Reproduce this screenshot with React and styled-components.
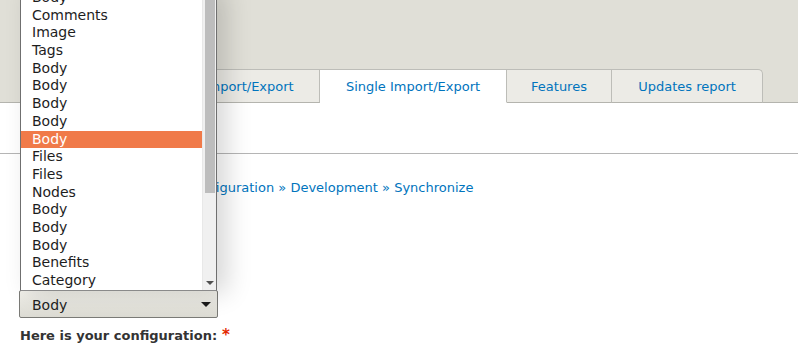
import React from 'react';
import styled, { createGlobalStyle } from 'styled-components';

const GlobalStyle = createGlobalStyle`
    html, body {
        margin: 0;
        padding: 0;
        background: #ffffff;
    }
    body {
        font-family: "DejaVu Sans", Verdana, sans-serif;
        color: #333333;
    }
`;

const Page = styled.div`
    position: relative;
    width: 798px;
    height: 343px;
    overflow: hidden;
    background: #ffffff;
`;

const Header = styled.header`
    height: 103px;
    background: #e0dfd7;
    border-bottom: 1px solid #b4b4ae;
    box-sizing: border-box;
    display: flex;
    align-items: flex-end;
    justify-content: flex-end;
    padding-right: 35px;
`;

const Tabs = styled.ul`
    display: flex;
    margin: 0 0 -1px 0;
    padding: 0;
    list-style: none;
`;

const Tab = styled.li`
    width: ${(p) => p.width}px;
    height: 34px;
    box-sizing: border-box;
    display: flex;
    align-items: center;
    justify-content: center;
    font-size: 13px;
    color: #0074bd;
    background: ${(p) => (p.active ? '#ffffff' : '#ecebe6')};
    border: 1px solid #bdbdb8;
    border-bottom: ${(p) => (p.active ? '1px solid #ffffff' : '1px solid #b4b4ae')};
    border-left-width: ${(p) => (p.first ? '1px' : '0')};
    border-radius: ${(p) => (p.last ? '0 5px 0 0' : p.first ? '5px 0 0 0' : '0')};
    padding-top: 1px;
`;

const SubBar = styled.div`
    height: 50px;
    border-bottom: 1px solid #b5b5b5;
`;

const Content = styled.div`
    padding: 0 20px;
`;

const Breadcrumb = styled.nav`
    margin-top: 26px;
    font-size: 13px;
    color: #0074bd;
    white-space: nowrap;
`;

const Crumb = styled.span`
    color: #0074bd;
`;

const Form = styled.form`
    margin-top: 95px;
`;

const SelectBox = styled.div`
    margin-left: -1px;
    width: 199px;
    height: 28px;
    box-sizing: border-box;
    border: 1px solid #7a7a76;
    border-radius: 2px;
    background: linear-gradient(#f1f0ea, #dcdbd3);
    display: flex;
    align-items: center;
    justify-content: space-between;
    padding: 1px 6px 0 12px;
    font-size: 14px;
    color: #222222;
`;

const Arrow = styled.span`
    width: 0;
    height: 0;
    border-left: ${(p) => p.size}px solid transparent;
    border-right: ${(p) => p.size}px solid transparent;
    border-top: ${(p) => p.size}px solid ${(p) => p.color};
`;

const Label = styled.label`
    display: block;
    margin-top: 10px;
    font-size: 13px;
    line-height: 16px;
    font-weight: bold;
    color: #333333;
`;

const Required = styled.span`
    color: #e32700;
    font-weight: bold;
    font-size: 15px;
    line-height: 0;
    margin-left: 5px;
`;

const Popup = styled.div`
    position: absolute;
    left: 20px;
    top: -12px;
    width: 197px;
    box-sizing: border-box;
    border: 1px solid #6f6f6f;
    border-bottom-color: #8a8a8a;
    background: #ffffff;
    display: flex;
    box-shadow: 10px 2px 24px rgba(0, 0, 0, 0.16);
`;

const Options = styled.ul`
    flex: 1;
    margin: 0;
    padding: 0;
    list-style: none;
`;

const Option = styled.li`
    height: 17.7px;
    line-height: 17.7px;
    padding-left: 11px;
    font-size: 14px;
    color: ${(p) => (p.selected ? '#ffffff' : '#1d1d1d')};
    background: ${(p) => (p.selected ? '#f07a49' : 'transparent')};
`;

const Scrollbar = styled.div`
    width: 14px;
    background: #f0f0f0;
    border-left: 1px solid #e8e8e8;
    display: flex;
    flex-direction: column;
    align-items: center;
    padding-bottom: 5px;
    box-sizing: border-box;
`;

const Thumb = styled.div`
    width: 10px;
    height: 204px;
    background: #bdbdbd;
    margin-bottom: auto;
`;

const options = [
    'Body', 'Comments', 'Image', 'Tags', 'Body', 'Body', 'Body', 'Body',
    'Body', 'Files', 'Files', 'Nodes', 'Body', 'Body', 'Body', 'Benefits',
    'Category',
];

const tabs = [
    { label: 'Full Import/Export', width: 169 },
    { label: 'Single Import/Export', width: 187, active: true },
    { label: 'Features', width: 105 },
    { label: 'Updates report', width: 151 },
];

const App = () => (
    <Page>
        <GlobalStyle />
        <Header>
            <Tabs>
                {tabs.map((t, i) => (
                    <Tab
                        key={t.label}
                        width={t.width}
                        active={t.active}
                        first={i === 0}
                        last={i === tabs.length - 1}
                    >
                        {t.label}
                    </Tab>
                ))}
            </Tabs>
        </Header>
        <SubBar />
        <Content>
            <Breadcrumb>
                <Crumb>Home</Crumb> » <Crumb>Administration</Crumb> »{' '}
                <Crumb>Configuration</Crumb> » <Crumb>Development</Crumb> »{' '}
                <Crumb>Synchronize</Crumb>
            </Breadcrumb>
            <Form>
                <SelectBox>
                    <span>Body</span>
                    <Arrow size={5} color="#1a1a1a" />
                </SelectBox>
                <Label>
                    Here is your configuration:<Required>*</Required>
                </Label>
            </Form>
        </Content>
        <Popup>
            <Options>
                {options.map((o, i) => (
                    <Option key={i} selected={i === 8}>
                        {o}
                    </Option>
                ))}
            </Options>
            <Scrollbar>
                <Thumb />
                <Arrow size={4} color="#505050" />
            </Scrollbar>
        </Popup>
    </Page>
);

export default App;
